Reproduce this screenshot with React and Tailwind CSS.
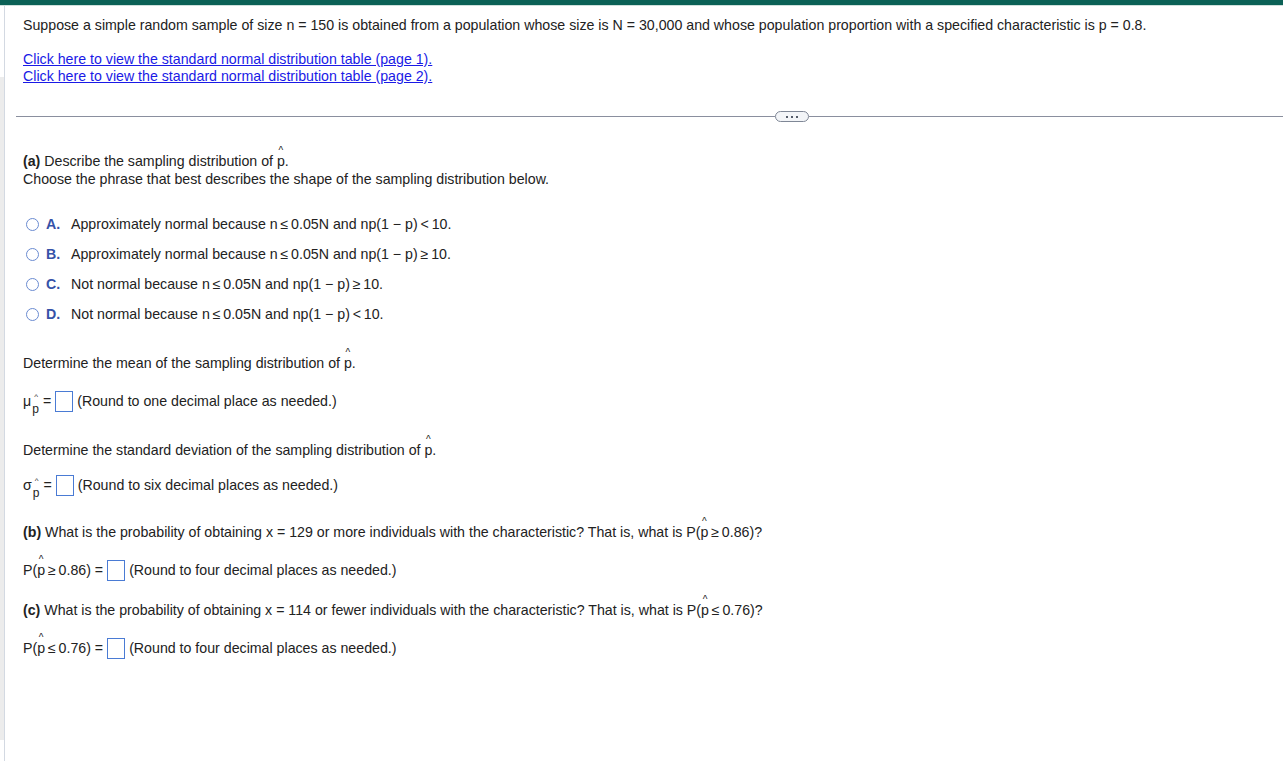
import React from "react";

const Hat = ({ children = "p" }) => (
  <span className="relative inline-block">
    {children}
    <span className="absolute left-0 right-0 top-[-7px] text-center text-[10px] leading-[10px]">^</span>
  </span>
);

const Sub = () => (
  <span className="relative inline-block top-[8px] text-[12px] ml-[1px]">
    p
    <span className="absolute left-[1px] right-0 top-[-8px] text-center text-[8px] leading-[8px]">^</span>
  </span>
);

const Box = () => (
  <span className="inline-block w-[18px] h-[21px] border border-[#4a7bd4] bg-white mx-[4px]" />
);

const options = [
  { l: "A.", t: "Approximately normal because n\u2009\u2264\u20090.05N and np(1 \u2212 p)\u2009<\u200910." },
  { l: "B.", t: "Approximately normal because n\u2009\u2264\u20090.05N and np(1 \u2212 p)\u2009\u2265\u200910." },
  { l: "C.", t: "Not normal because n\u2009\u2264\u20090.05N and np(1 \u2212 p)\u2009\u2265\u200910." },
  { l: "D.", t: "Not normal because n\u2009\u2264\u20090.05N and np(1 \u2212 p)\u2009<\u200910." },
];

export default function App() {
  return (
    <div className="min-h-screen bg-white text-[14.2px] leading-[17px] text-[#222]" style={{ fontFamily: '"Liberation Sans", Arial, sans-serif' }}>
      <div className="h-[5px] bg-[#0b6156]" />
      <div className="h-px bg-[#cfe0dc]" />
      <div className="flex">
        {/* left gutter */}
        <div className="w-[4px] pt-[71px]">
          <div className="h-[663px] bg-[#ececec]" />
        </div>
        <div className="flex-1 border-l border-[#d3d9e2] min-h-[755px]">
          <div className="pl-[18px] pt-[11px]">
            <p>
              Suppose a simple random sample of size n = 150 is obtained from a population whose size is N = 30,000 and whose population proportion with a specified characteristic is p = 0.8.
            </p>
            <div className="mt-[17px] flex flex-col items-start">
              <a className="text-[#1a1ae6] underline">Click here to view the standard normal distribution table (page 1).</a>
              <a className="text-[#1a1ae6] underline">Click here to view the standard normal distribution table (page 2).</a>
            </div>
          </div>

          {/* divider */}
          <div className="mt-[26px] ml-[11px] flex items-center h-[11px]">
            <div className="w-[759px] h-px bg-[#8a8f9e]" />
            <button className="w-[34px] h-[11px] rounded-full border border-[#7f8796] bg-[#f3f5f8] flex items-center justify-center gap-[3px]">
              <span className="w-[2px] h-[2px] bg-[#555c6a]" />
              <span className="w-[2px] h-[2px] bg-[#555c6a]" />
              <span className="w-[2px] h-[2px] bg-[#555c6a]" />
            </button>
            <div className="flex-1 h-px bg-[#8a8f9e]" />
          </div>

          <div className="pl-[18px]">
            <p className="mt-[31px]">
              <b>(a)</b> Describe the sampling distribution of <Hat />.
            </p>
            <p className="mt-px">Choose the phrase that best describes the shape of the sampling distribution below.</p>

            <div className="mt-[21px] flex flex-col">
              {options.map((o) => (
                <div key={o.l} className="h-[30px] flex items-center">
                  <span className="ml-[3px] w-[13px] h-[13px] rounded-full border-[1.5px] border-[#6a8bd1]" />
                  <span className="ml-[7px] w-[25px] font-bold text-[#3552a8]">{o.l}</span>
                  <span>{o.t}</span>
                </div>
              ))}
            </div>

            <p className="mt-[26px]">
              Determine the mean of the sampling distribution of <Hat />.
            </p>
            <div className="mt-[19px] h-[21px] flex items-center">
              <span>&mu;</span>
              <Sub />
              <span className="ml-[4px]">=</span>
              <Box />
              <span>(Round to one decimal place as needed.)</span>
            </div>

            <p className="mt-[30px]">
              Determine the standard deviation of the sampling distribution of <Hat />.
            </p>
            <div className="mt-[16px] h-[21px] flex items-center">
              <span>&sigma;</span>
              <Sub />
              <span className="ml-[4px]">=</span>
              <Box />
              <span>(Round to six decimal places as needed.)</span>
            </div>

            <p className="mt-[28px]">
              <b>(b)</b> What is the probability of obtaining x = 129 or more individuals with the characteristic? That is, what is P(<Hat />{"\u2009\u2265\u20090.86)?"}
            </p>
            <div className="mt-[19px] h-[21px] flex items-center">
              <span>
                P(<Hat />{"\u2009\u2265\u20090.86) ="}
              </span>
              <Box />
              <span>(Round to four decimal places as needed.)</span>
            </div>

            <p className="mt-[21px]">
              <b>(c)</b> What is the probability of obtaining x = 114 or fewer individuals with the characteristic? That is, what is P(<Hat />{"\u2009\u2264\u20090.76)?"}
            </p>
            <div className="mt-[19px] h-[21px] flex items-center">
              <span>
                P(<Hat />{"\u2009\u2264\u20090.76) ="}
              </span>
              <Box />
              <span>(Round to four decimal places as needed.)</span>
            </div>
          </div>
        </div>
      </div>
    </div>
  );
}
